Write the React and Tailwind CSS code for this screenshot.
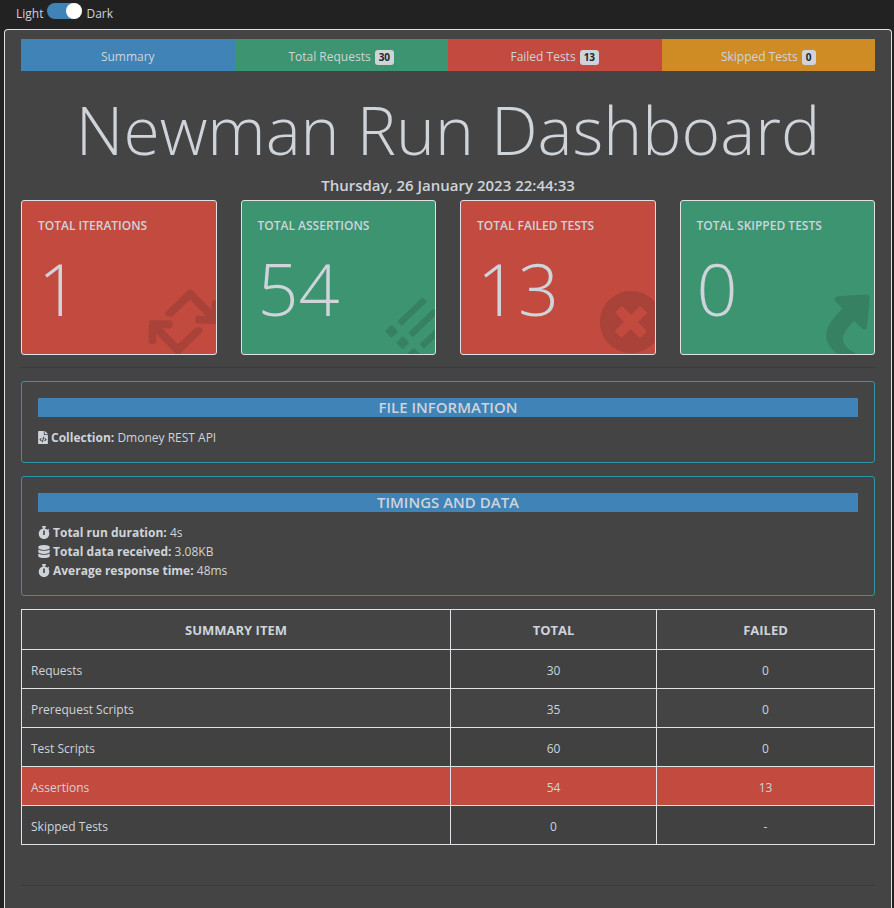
import { useState } from "react";
import {
  FaDatabase,
  FaFileCode,
  FaList,
  FaPlusCircle,
  FaRetweet,
  FaShare,
  FaStopwatch,
} from "react-icons/fa";

const tabs = [
  { label: "Summary", color: "bg-[#4083b7]" },
  { label: "Total Requests", count: 30, color: "bg-[#3d9470]" },
  { label: "Failed Tests", count: 13, color: "bg-[#c34a3f]" },
  { label: "Skipped Tests", count: 0, color: "bg-[#d08c24]" },
];

const cards = [
  { label: "Total Iterations", value: 1, icon: FaRetweet, size: "h-16 w-20", color: "bg-[#c34a3f]" },
  { label: "Total Assertions", value: 54, icon: FaList, size: "size-[51px]", color: "bg-[#3d9470]" },
  { label: "Total Failed Tests", value: 13, icon: FaPlusCircle, size: "size-16", color: "bg-[#c34a3f]" },
  { label: "Total Skipped Tests", value: 0, icon: FaShare, size: "size-16", color: "bg-[#3d9470]" },
];

const rows = [
  { item: "Requests", total: 30, failed: 0, color: "bg-[#414141]" },
  { item: "Prerequest Scripts", total: 35, failed: 0, color: "" },
  { item: "Test Scripts", total: 60, failed: 0, color: "bg-[#414141]" },
  { item: "Assertions", total: 54, failed: 13, color: "bg-[#c34a3f]" },
  { item: "Skipped Tests", total: 0, failed: "-", color: "bg-[#414141]" },
];

function ThemeSwitch() {
  const [dark, setDark] = useState(true);
  return (
    <div className="flex h-[29px] items-start pl-4">
      <label className="flex items-start gap-1 leading-[19px]">
        <span className="pt-1">Light</span>
        <span className="flex pt-[3px]">
          <input
            type="checkbox"
            role="switch"
            aria-label="Dark theme"
            checked={dark}
            onChange={(e) => setDark(e.target.checked)}
            className="h-4 w-[35px] appearance-none rounded-full bg-[#4083b7] before:block before:size-4 before:rounded-full before:bg-white checked:before:ml-[19px]"
          />
        </span>
        <span className="pt-1">Dark</span>
      </label>
    </div>
  );
}

function StatCard({ label, value, icon: Icon, size, color }) {
  return (
    <div className={`relative h-[155px] overflow-hidden rounded-[3px] border border-[#dee2e6] px-4 pt-4 ${color}`}>
      <h6 className="text-[12px] leading-[18px] font-semibold uppercase">{label}</h6>
      <p className="pt-[6px] text-[72px] leading-[94px] font-light">{value}</p>
      <Icon className={`absolute -right-2 bottom-0 -rotate-44 text-[#141414]/15 ${size}`} aria-hidden="true" />
    </div>
  );
}

function Panel({ title, children }) {
  return (
    <section className="rounded-[3px] border border-[#2f96a3] px-4 pt-4 pb-[15px]">
      <h5 className="mb-[11px] bg-[#4083b7] text-center text-[15px] leading-[19px] font-semibold uppercase">
        {title}
      </h5>
      {children}
    </section>
  );
}

function Fact({ icon: Icon, name, value, iconWidth }) {
  return (
    <p className="flex items-center gap-[3px] leading-[19px]">
      <Icon className={`h-[13px] ${iconWidth}`} aria-hidden="true" />
      <span>
        <strong className="font-bold">{name}:</strong> {value}
      </span>
    </p>
  );
}

export default function App() {
  return (
    <div className="flex min-h-screen flex-col bg-[#222] font-['Open_Sans','Noto_Sans',sans-serif] text-[12px] text-[#ced4da]">
      <ThemeSwitch />
      <main className="mr-[2px] ml-1 flex-1 rounded-t-[4px] border border-b-0 border-[#dee2e6] bg-[#444] px-4 pt-[9px]">
        <nav className="grid grid-cols-4">
          {tabs.map((tab) => (
            <a
              key={tab.label}
              href="#"
              className={`flex h-8 items-center justify-center gap-1 pt-1 ${tab.color}`}
            >
              {tab.label}
              {tab.count !== undefined && (
                <span className="rounded-[3px] bg-[#ced4da] px-1 text-[10px] leading-[15px] font-bold text-[#212529]">
                  {tab.count}
                </span>
              )}
            </a>
          ))}
        </nav>

        <header className="text-center">
          <h1 className="pt-3 text-[66px] leading-[92px] font-light">Newman Run Dashboard</h1>
          <h5 className="text-[15px] leading-[20px] font-semibold">Thursday, 26 January 2023 22:44:33</h5>
        </header>

        <div className="mt-[5px] grid grid-cols-4 gap-6">
          {cards.map((card) => (
            <StatCard key={card.label} {...card} />
          ))}
        </div>

        <hr className="mt-3 mb-[13px] border-[#3c3c3c]" />

        <div className="flex flex-col gap-[13px]">
          <Panel title="File Information">
            <Fact icon={FaFileCode} name="Collection" value="Dmoney REST API" iconWidth="w-[10px]" />
          </Panel>
          <Panel title="Timings and Data">
            <Fact icon={FaStopwatch} name="Total run duration" value="4s" iconWidth="w-3" />
            <Fact icon={FaDatabase} name="Total data received" value="3.08KB" iconWidth="w-3" />
            <Fact icon={FaStopwatch} name="Average response time" value="48ms" iconWidth="w-3" />
          </Panel>

          <table className="w-full table-fixed border-collapse border border-[#dee2e6] text-center">
            <colgroup>
              <col />
              <col className="w-[206px]" />
              <col className="w-[218px]" />
            </colgroup>
            <thead>
              <tr className="h-10 text-[13px] uppercase">
                <th className="border border-[#dee2e6] pt-[2px] font-bold">Summary Item</th>
                <th className="border border-[#dee2e6] pt-[2px] font-bold">Total</th>
                <th className="border border-[#dee2e6] pt-[2px] font-bold">Failed</th>
              </tr>
            </thead>
            <tbody>
              {rows.map((row) => (
                <tr key={row.item} className={`h-[39px] ${row.color}`}>
                  <td className="border border-[#dee2e6] px-[9px] pt-[3px] text-left">{row.item}</td>
                  <td className="border border-[#dee2e6] pt-[3px]">{row.total}</td>
                  <td className="border border-[#dee2e6] pt-[3px]">{row.failed}</td>
                </tr>
              ))}
            </tbody>
          </table>
        </div>

        <hr className="mt-10 border-[#3c3c3c]" />
      </main>
    </div>
  );
}
